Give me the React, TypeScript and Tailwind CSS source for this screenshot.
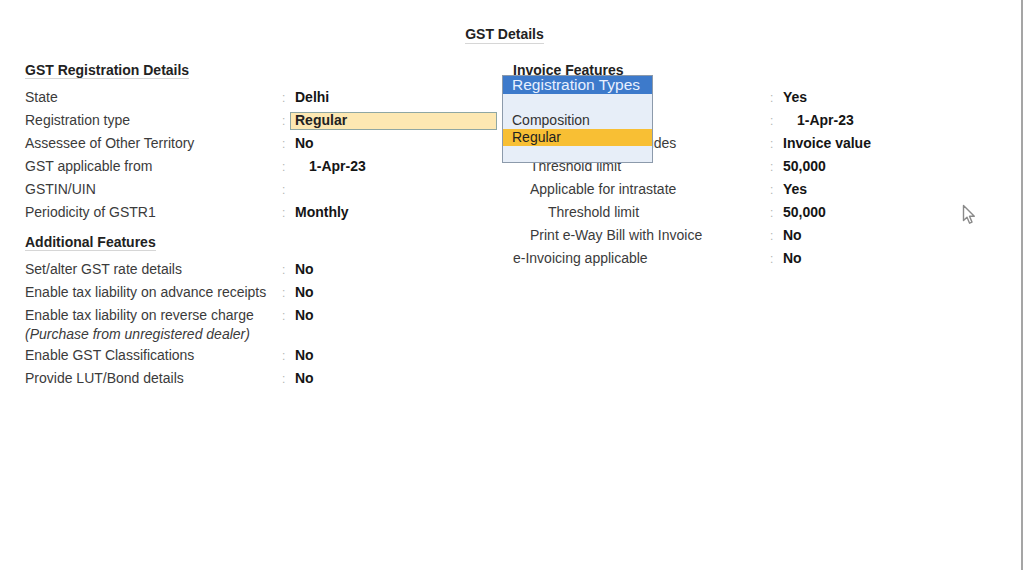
type Row = {
  label: string;
  value?: string;
  indent?: number;
  valueIndent?: boolean;
  note?: string;
  field?: boolean;
};

const registration: Row[] = [
  { label: "State", value: "Delhi" },
  { label: "Registration type", value: "Regular", field: true },
  { label: "Assessee of Other Territory", value: "No" },
  { label: "GST applicable from", value: "1-Apr-23", valueIndent: true },
  { label: "GSTIN/UIN", value: "" },
  { label: "Periodicity of GSTR1", value: "Monthly" },
];

const additional: Row[] = [
  { label: "Set/alter GST rate details", value: "No" },
  { label: "Enable tax liability on advance receipts", value: "No" },
  {
    label: "Enable tax liability on reverse charge",
    value: "No",
    note: "(Purchase from unregistered dealer)",
  },
  { label: "Enable GST Classifications", value: "No" },
  { label: "Provide LUT/Bond details", value: "No" },
];

const invoice: Row[] = [
  { label: "e-Way Bill applicable", value: "Yes" },
  { label: "Applicable from", value: "1-Apr-23", valueIndent: true },
  { label: "Threshold limit includes", value: "Invoice value", indent: 1 },
  { label: "Threshold limit", value: "50,000", indent: 1 },
  { label: "Applicable for intrastate", value: "Yes", indent: 1 },
  { label: "Threshold limit", value: "50,000", indent: 2 },
  { label: "Print e-Way Bill with Invoice", value: "No", indent: 1 },
  { label: "e-Invoicing applicable", value: "No" },
];

function Heading({ children, className = "" }: { children: string; className?: string }) {
  return (
    <div className={`h-[26px] ${className}`}>
      <span className="inline-block border-b border-[#d6d6d6] font-bold leading-[16px] text-[#222]">
        {children}
      </span>
    </div>
  );
}

function FieldRow({ row, labelWidth }: { row: Row; labelWidth: string }) {
  const pad = row.indent === 2 ? "pl-[35px]" : row.indent === 1 ? "pl-[17px]" : "";
  return (
    <div>
      <div className="flex h-[23px] items-center">
        <div className={`shrink-0 text-[#3b3b3b] ${labelWidth} ${pad}`}>{row.label}</div>
        <div className="w-[8px] shrink-0 text-[12px] text-[#b5b5b5]">:</div>
        {row.field ? (
          <div className="flex h-[18px] w-[207px] items-center border border-[#8fa7a3] bg-[#fde8b2] pl-[4px] font-bold text-[#222]">
            {row.value}
          </div>
        ) : (
          <div className={`font-bold text-[#151515] ${row.valueIndent ? "pl-[19px]" : "pl-[5px]"}`}>
            {row.value}
          </div>
        )}
      </div>
      {row.note && (
        <div className="h-[17px] leading-[14px] italic text-[#3b3b3b]">{row.note}</div>
      )}
    </div>
  );
}

function Cursor() {
  return (
    <svg width="16" height="22" viewBox="0 0 16 22" className="absolute left-[962px] top-[204px]">
      <path
        d="M1.5 1.5 L1.5 16.5 L5 13.2 L7.6 19.2 L10 18.1 L7.5 12.3 L12.3 12.3 Z"
        fill="#fff"
        stroke="#8a8a8a"
        strokeWidth="1.4"
        strokeLinejoin="round"
      />
    </svg>
  );
}

export default function App() {
  return (
    <div
      className="relative flex h-[570px] w-[1024px] overflow-hidden bg-white text-[14px] text-[#222]"
      style={{ fontFamily: '"Liberation Sans", Arial, sans-serif' }}
    >
      <div className="flex-1">
        <div className="flex h-[60px] justify-center pt-[26px] pr-[12px]">
          <span className="h-[18px] border-b border-[#d6d6d6] font-bold leading-[16px] text-[#222]">
            GST Details
          </span>
        </div>

        <div className="flex">
          <div className="w-[513px] shrink-0 pl-[25px]">
            <Heading>GST Registration Details</Heading>
            {registration.map((r) => (
              <FieldRow key={r.label} row={r} labelWidth="w-[257px]" />
            ))}
            <Heading className="mt-[8px]">Additional Features</Heading>
            {additional.map((r) => (
              <FieldRow key={r.label} row={r} labelWidth="w-[257px]" />
            ))}
          </div>

          <div className="flex-1">
            <Heading>Invoice Features</Heading>
            {invoice.map((r, i) => (
              <FieldRow key={i} row={r} labelWidth="w-[257px]" />
            ))}
          </div>
        </div>
      </div>

      <div className="mr-[1px] w-[2px] bg-[#a5a5a5]" />

      {/* registration type picker */}
      <div className="absolute left-[502px] top-[75px] flex h-[88px] w-[151px] flex-col border border-[#8c9aab] bg-[#e7eef8]">
        <div className="h-[18px] bg-[#3d7acb] pl-[9px] text-[15.5px] leading-[18px] text-[#e8f0ff]">
          Registration Types
        </div>
        <div className="h-[18px]" />
        <div className="h-[17px] pl-[9px] leading-[17px] text-[#333]">Composition</div>
        <div className="h-[17px] bg-[#f8bf34] pl-[9px] leading-[17px] text-[#222]">Regular</div>
      </div>

      <Cursor />
    </div>
  );
}
